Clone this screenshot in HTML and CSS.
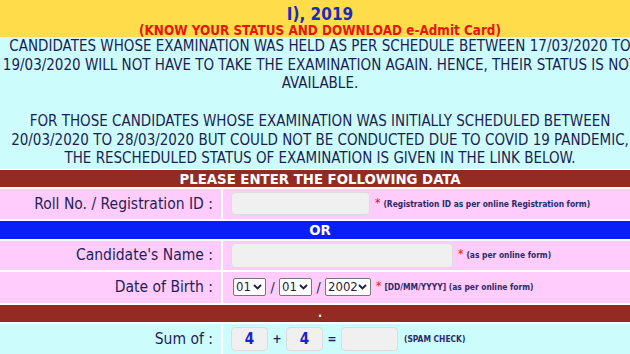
FILE: index.html
```html
<!DOCTYPE html>
<html>
<head>
<meta charset="utf-8">
<link rel="stylesheet" href="styles.css">
</head>
<body>
<div class="page">
  <header class="head">
    <div class="title">COMBINED HIGHER SECONDARY LEVEL (10+2) EXAMINATION (TIER-<br>I), 2019</div>
    <div class="subtitle">(KNOW YOUR STATUS AND DOWNLOAD e-Admit Card)</div>
  </header>
  <section class="notice">
    <p>CANDIDATES WHOSE EXAMINATION WAS HELD AS PER SCHEDULE BETWEEN 17/03/2020 TO<br>19/03/2020 WILL NOT HAVE TO TAKE THE EXAMINATION AGAIN. HENCE, THEIR STATUS IS NOT<br>AVAILABLE.</p>
    <p>FOR THOSE CANDIDATES WHOSE EXAMINATION WAS INITIALLY SCHEDULED BETWEEN<br>20/03/2020 TO 28/03/2020 BUT COULD NOT BE CONDUCTED DUE TO COVID 19 PANDEMIC,<br>THE RESCHEDULED STATUS OF EXAMINATION IS GIVEN IN THE LINK BELOW.</p>
  </section>
  <div class="form">
    <div class="bar bar-brown">PLEASE ENTER THE FOLLOWING DATA</div>
    <div class="row pink">
      <div class="label">Roll No. / Registration ID :</div>
      <div class="field"><input class="text roll" type="text"><span class="req">*</span><span class="note">(Registration ID as per online Registration form)</span></div>
    </div>
    <div class="bar bar-blue">OR</div>
    <div class="row pink row-name">
      <div class="label">Candidate's Name :</div>
      <div class="field"><input class="text name" type="text"><span class="req">*</span><span class="note">(as per online form)</span></div>
    </div>
    <div class="row pink row-dob">
      <div class="label">Date of Birth :</div>
      <div class="field">
        <span class="selbox sel-d"><select class="sel"><option>01</option></select><svg class="chev" width="9" height="6" viewBox="0 0 9 6"><path d="M1 1 L4.5 4.5 L8 1" fill="none" stroke="#1e1e3a" stroke-width="1.8"/></svg></span><span class="slash">/</span>
        <span class="selbox sel-d"><select class="sel"><option>01</option></select><svg class="chev" width="9" height="6" viewBox="0 0 9 6"><path d="M1 1 L4.5 4.5 L8 1" fill="none" stroke="#1e1e3a" stroke-width="1.8"/></svg></span><span class="slash">/</span>
        <span class="selbox sel-y"><select class="sel"><option>2002</option></select><svg class="chev" width="9" height="6" viewBox="0 0 9 6"><path d="M1 1 L4.5 4.5 L8 1" fill="none" stroke="#1e1e3a" stroke-width="1.8"/></svg></span><span class="req">*</span><span class="note">[DD/MM/YYYY] (as per online form)</span>
      </div>
    </div>
    <div class="bar bar-brown bar-dot">.</div>
    <div class="row cyan">
      <div class="label">Sum of :</div>
      <div class="field"><input class="text num" type="text" value="4"><span class="op">+</span><input class="text num" type="text" value="4"><span class="op">=</span><input class="text ans" type="text"><span class="note spam">(SPAM CHECK)</span></div>
    </div>
  </div>
</div>
</body>
</html>
```
FILE: styles.css
```css
html, body {
  margin: 0;
  padding: 0;
  background: #ffffff;
}
body {
  width: 630px;
  height: 354px;
  overflow: hidden;
  font-family: "DejaVu Sans Condensed", "DejaVu Sans", sans-serif;
  font-stretch: condensed;
  color: #1e1e5a;
}
.page {
  width: 640px;
}
.head {
  background: #ffdc4a;
  height: 37px;
  text-align: center;
  overflow: hidden;
}
.title {
  font-weight: bold;
  color: #1b2bbf;
  font-size: 17px;
  line-height: 22px;
  margin-top: -19px;
  white-space: nowrap;
}
.subtitle {
  color: #e8140e;
  font-weight: bold;
  font-size: 13.4px;
  line-height: 12px;
  white-space: nowrap;
}
.notice {
  background: #ccfcfc;
  text-align: center;
  white-space: nowrap;
  font-size: 15px;
  line-height: 18.7px;
  padding-bottom: 1px;
  overflow: hidden;
  color: #1c1c55;
}
.notice p {
  margin: 0;
}
.notice p + p {
  margin-top: 18.7px;
}
.form {
  display: flex;
  flex-direction: column;
  gap: 2px;
  padding-top: 1px;
  background: #ffffff;
}
.bar {
  height: 17px;
  line-height: 17px;
  text-align: center;
  color: #ffffff;
  font-weight: bold;
  font-size: 14.8px;
}
.bar-brown {
  background: #922b22;
}
.bar-blue {
  background: #0a1ff5;
  height: 18px;
  line-height: 18px;
}
.bar-dot {
  font-size: 12px;
}
.row {
  display: grid;
  grid-template-columns: 221px 1fr;
  column-gap: 2px;
  height: 30px;
}
.row-name {
  height: 29px;
}
.row-dob {
  height: 31px;
}
.pink > div {
  background: #ffccfc;
}
.cyan > div {
  background: #ccfcfc;
}
.label {
  padding-right: 8px;
  font-size: 15.5px;
  display: flex;
  align-items: center;
  justify-content: flex-end;
  white-space: nowrap;
}
.field {
  display: flex;
  align-items: center;
  padding-left: 8px;
  white-space: nowrap;
}
.text {
  box-sizing: border-box;
  background: #f0f0f0;
  border: 1px solid #dcdcdc;
  border-radius: 4px;
  height: 24px;
  padding: 0;
  margin: 0;
  font-family: inherit;
}
.roll {
  width: 139px;
  height: 23px;
}
.name {
  width: 222px;
  height: 25px;
}
.num {
  width: 37px;
  text-align: center;
  color: #1a22cc;
  font-weight: bold;
  font-size: 15px;
}
.ans {
  width: 57px;
}
.req {
  color: #e8140e;
  font-size: 12px;
  margin-left: 5px;
  margin-right: 3px;
  position: relative;
  top: -1px;
}
.note {
  font-size: 8.4px;
  font-weight: bold;
  color: #2a2a6a;
}
.spam {
  margin-left: 6px;
}
.op {
  font-size: 12px;
  font-weight: bold;
  width: 18px;
  text-align: center;
}
.selbox {
  box-sizing: border-box;
  display: inline-flex;
  align-items: center;
  justify-content: space-between;
  height: 18px;
  border: 1px solid #767676;
  border-radius: 2px;
  background: #ffffff;
  padding: 0 3px 0 2px;
}
.sel {
  appearance: none;
  -webkit-appearance: none;
  border: 0;
  background: transparent;
  font-size: 13px;
  font-family: "DejaVu Sans Condensed", "DejaVu Sans", sans-serif;
  color: #1e1e3a;
  padding: 0;
  margin: 0;
  outline: none;
  height: 16px;
  line-height: 16px;
}
.chev {
  flex: none;
}
.sel-d {
  width: 33px;
}
.sel-y {
  width: 46px;
}
.field .selbox:first-child {
  margin-left: 2px;
}
.slash {
  font-size: 14px;
  width: 13px;
  text-align: center;
}
```
